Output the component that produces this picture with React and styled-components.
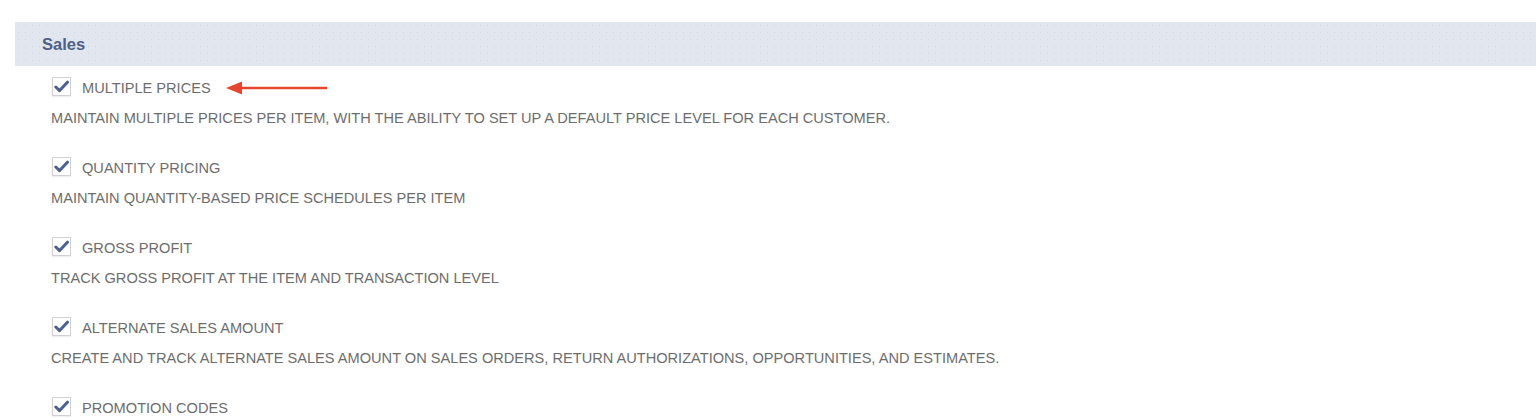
import React from "react";
import styled, { createGlobalStyle } from "styled-components";

const Global = createGlobalStyle`
  html, body { margin: 0; padding: 0; background: #ffffff; }
  body { font-family: "Liberation Sans", Arial, sans-serif; }
`;

const Page = styled.div`
  width: 1536px;
  height: 420px;
  overflow: hidden;
  padding-top: 22px;
  box-sizing: border-box;
`;

const Header = styled.div`
  margin-left: 15px;
  height: 44px;
  display: flex;
  align-items: center;
  padding-left: 27px;
  background-color: #e1e6ef;
  background-image: radial-gradient(rgba(170, 180, 200, 0.3) 0.6px, transparent 0.8px);
  background-size: 7px 7px;
  font-size: 16.5px;
  font-weight: bold;
  color: #4f5f87;
`;

const List = styled.div`
  display: flex;
  flex-direction: column;
  padding-left: 51px;
  padding-top: 6px;
`;

const Item = styled.div`
  display: flex;
  flex-direction: column;
  height: 80px;
`;

const CheckRow = styled.div`
  display: flex;
  align-items: center;
  gap: 11px;
  height: 30px;
`;

const Box = styled.span`
  width: 19px;
  height: 19px;
  box-sizing: border-box;
  margin-left: 1px;
  border: 1px solid #d2d2d2;
  box-shadow: 0 1px 1px rgba(0, 0, 0, 0.06);
  background: #fff;
  display: flex;
  align-items: center;
  justify-content: center;
  margin-top: -2px;
`;

const Label = styled.span`
  font-size: 14.6px;
  line-height: 17px;
  color: #6d6d6d;
  margin-top: 3px;
`;

const Desc = styled.div`
  font-size: 14.6px;
  line-height: 17px;
  color: #6d6d6d;
  margin-top: 8px;
`;

const Arrow = styled.svg`
  display: block;
  margin-left: 4px;
  margin-top: 2px;
`;

const Check = () => (
  <svg width="15" height="13" viewBox="0 0 15 13">
    <path d="M1.8 7 L5.6 10.6 L13.4 2.2" fill="none" stroke="#4b5f95" strokeWidth="3" strokeLinecap="round" strokeLinejoin="round" />
  </svg>
);

const items = [
  { label: "MULTIPLE PRICES", desc: "MAINTAIN MULTIPLE PRICES PER ITEM, WITH THE ABILITY TO SET UP A DEFAULT PRICE LEVEL FOR EACH CUSTOMER.", arrow: true },
  { label: "QUANTITY PRICING", desc: "MAINTAIN QUANTITY-BASED PRICE SCHEDULES PER ITEM" },
  { label: "GROSS PROFIT", desc: "TRACK GROSS PROFIT AT THE ITEM AND TRANSACTION LEVEL" },
  { label: "ALTERNATE SALES AMOUNT", desc: "CREATE AND TRACK ALTERNATE SALES AMOUNT ON SALES ORDERS, RETURN AUTHORIZATIONS, OPPORTUNITIES, AND ESTIMATES." },
  { label: "PROMOTION CODES", desc: "" },
];

export default function App() {
  return (
    <Page>
      <Global />
      <Header>Sales</Header>
      <List>
        {items.map((it) => (
          <Item key={it.label}>
            <CheckRow>
              <Box><Check /></Box>
              <Label>{it.label}</Label>
              {it.arrow && (
                <Arrow width="102" height="16" viewBox="0 0 102 16">
                  <line x1="12" y1="8" x2="101" y2="8" stroke="#e8452f" strokeWidth="2.4" />
                  <polygon points="0,8 16,1.5 16,14.5" fill="#e8452f" />
                </Arrow>
              )}
            </CheckRow>
            {it.desc && <Desc>{it.desc}</Desc>}
          </Item>
        ))}
      </List>
    </Page>
  );
}
